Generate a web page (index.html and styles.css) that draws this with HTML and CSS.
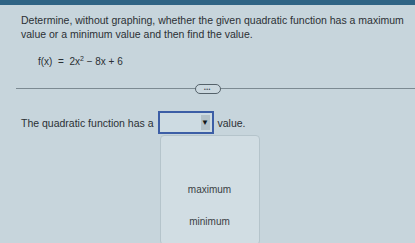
FILE: index.html
```html
<!DOCTYPE html>
<html lang="en">
<head>
  <meta charset="UTF-8" />
  <title>Quadratic Question</title>
  <link rel="stylesheet" href="styles.css">
</head>
<body>
  <div class="topbar"></div>

  <div class="question">
    <p class="prompt">Determine, without graphing, whether the given quadratic function has a maximum value or a minimum value and then find the value.</p>
    <p class="formula">f(x) &nbsp;=&nbsp; 2x<sup>2</sup> &minus; 8x + 6</p>
  </div>

  <div class="divider">
    <span class="more">&bull;&bull;&bull;</span>
  </div>

  <div class="answer">
    <span>The quadratic function has a</span>
    <span class="select-wrap">
      <span class="select">
        <span class="arrow">&#9660;</span>
      </span>
      <div class="menu">
        <div class="option">maximum</div>
        <div class="option">minimum</div>
      </div>
    </span>
    <span>value.</span>
  </div>
</body>
</html>
```

FILE: styles.css
```css
/* Base */
body {
  margin: 0;
  font-family: 'Liberation Sans', Arial, sans-serif;
  font-size: 10.5px;
  color: #2b3034;
  background: #c7d5dc;
  height: 243px;
  overflow: hidden;
}

.topbar {
  height: 5px;
  background: #2f6485;
}

/* Question */
.question {
  padding: 8px 2px 0 21px;
}

.prompt {
  margin: 0;
  line-height: 14px;
}

.formula {
  margin: 15px 0 0 17px;
  font-size: 10px;
}

.formula sup {
  font-size: 7px;
  line-height: 0;
}

/* Divider */
.divider {
  display: flex;
  justify-content: center;
  margin: 21px 0 0 16px;
  border-top: 1px solid #7c8a92;
  height: 0;
}

.more {
  margin-top: -5px;
  margin-left: -16px;
  width: 24px;
  height: 8px;
  border: 1px solid #55626a;
  border-radius: 5px;
  background: #cbd8df;
  font-size: 5px;
  line-height: 8px;
  text-align: center;
  color: #3f4a50;
  letter-spacing: 0.5px;
}

/* Answer row */
.answer {
  display: flex;
  align-items: center;
  gap: 4px;
  padding: 22px 0 0 21px;
}

.select-wrap {
  position: relative;
}

.select {
  display: flex;
  justify-content: flex-end;
  align-items: center;
  width: 48px;
  height: 19px;
  padding: 0 2px;
  border: 2px solid #3c5ea6;
  background: #cddbe2;
}

.arrow {
  display: flex;
  align-items: center;
  justify-content: center;
  width: 9px;
  height: 15px;
  background: #b3c1c8;
  font-size: 8px;
  color: #111518;
}

.menu {
  position: absolute;
  top: 24px;
  left: 2px;
  width: 100px;
  height: 110px;
  box-sizing: border-box;
  padding-top: 48px;
  border: 1px solid #b5c4cb;
  border-radius: 4px;
  background: #d1dde3;
  display: flex;
  flex-direction: column;
  align-items: center;
  gap: 21px;
}

.option {
  font-size: 10px;
  color: #3a3f43;
}
```
